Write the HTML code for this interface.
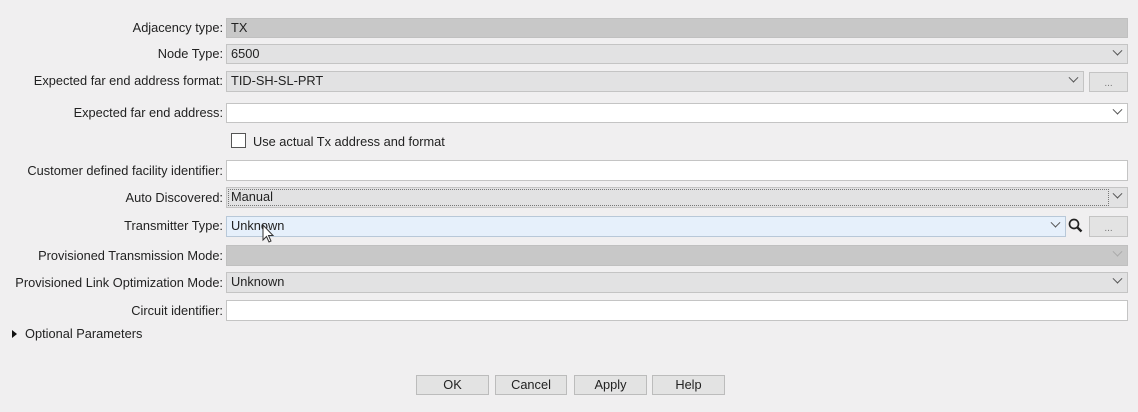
<!DOCTYPE html>
<html><head><style>
body{margin:0;width:1138px;height:412px;background:#f0eff0;font-family:"Liberation Sans",Arial,sans-serif;font-size:12.8px;color:#222;position:relative;overflow:hidden}
.l{position:absolute;right:915px;white-space:nowrap;text-align:right}
.f{position:absolute;left:226px;box-sizing:border-box;border:1px solid #c4c4c4;background:#fff;padding-left:4px;line-height:18px}
.g{background:#c8c8c8;border-color:#c0c0c0}
.d{background:#e2e2e3;border-color:#c4c4c4}
.ar{position:absolute;right:6px;top:5px;width:6px;height:6px;border-right:1.3px solid #555;border-bottom:1.3px solid #555;transform:rotate(45deg) translate(-2px,-2px)}
.b{position:absolute;box-sizing:border-box;border:1px solid #c4c4c4;background:#e3e3e3;text-align:center;color:#777;font-size:10px}
.btn{position:absolute;top:375px;height:20px;box-sizing:border-box;border:1px solid #bcbcbc;background:#e3e3e3;text-align:center;line-height:18px;color:#222}
</style></head><body>
<div class="l" style="top:20px">Adjacency type:</div>
<div class="f g" style="top:18px;width:902px;height:20px">TX</div>

<div class="l" style="top:46px">Node Type:</div>
<div class="f d" style="top:44px;width:902px;height:20px">6500<span class="ar"></span></div>

<div class="l" style="top:73px">Expected far end address format:</div>
<div class="f d" style="top:71px;width:858px;height:21px">TID-SH-SL-PRT<span class="ar"></span></div>
<div class="b" style="left:1089px;top:72px;width:39px;height:20px;line-height:22px">...</div>

<div class="l" style="top:105px">Expected far end address:</div>
<div class="f" style="top:103px;width:902px;height:20px"><span class="ar"></span></div>

<div style="position:absolute;left:231px;top:133px;width:15px;height:15px;box-sizing:border-box;border:1px solid #555;background:#fff"></div>
<div style="position:absolute;left:253px;top:134px">Use actual Tx address and format</div>

<div class="l" style="top:163px">Customer defined facility identifier:</div>
<div class="f" style="top:160px;width:902px;height:21px"></div>

<div class="l" style="top:190px">Auto Discovered:</div>
<div class="f d" style="top:187px;width:902px;height:21px"><div style="position:absolute;left:1px;top:1px;right:18px;bottom:1px;border:1px dotted #777"></div><span style="position:relative">Manual</span><span class="ar"></span></div>

<div class="l" style="top:218px">Transmitter Type:</div>
<div class="f" style="top:216px;width:840px;height:21px;background:#e6f0fb;border-color:#b8c8d8">Unknown<span class="ar"></span></div>
<svg style="position:absolute;left:1067px;top:217px" width="18" height="18" viewBox="0 0 18 18"><circle cx="7" cy="7" r="4.5" fill="none" stroke="#222" stroke-width="1.7"/><path d="M10.3 10.3L14.5 14.5" stroke="#222" stroke-width="2.4"/></svg>
<div class="b" style="left:1089px;top:216px;width:39px;height:21px;line-height:24px">...</div>
<svg style="position:absolute;left:262px;top:224px" width="14" height="20" viewBox="0 0 14 20"><path d="M1 1L1 16L4.5 12.5L7 18L9 17L6.5 11.5L11 11.5Z" fill="#fff" stroke="#333" stroke-width="1"/></svg>

<div class="l" style="top:248px">Provisioned Transmission Mode:</div>
<div class="f g" style="top:245px;width:902px;height:21px"><span class="ar" style="border-color:#aaa"></span></div>

<div class="l" style="top:275px">Provisioned Link Optimization Mode:</div>
<div class="f d" style="top:272px;width:902px;height:21px">Unknown<span class="ar"></span></div>

<div class="l" style="top:303px">Circuit identifier:</div>
<div class="f" style="top:300px;width:902px;height:21px"></div>

<div style="position:absolute;left:12px;top:330px;width:0;height:0;border-left:5px solid #111;border-top:4px solid transparent;border-bottom:4px solid transparent"></div>
<div style="position:absolute;left:25px;top:326px">Optional Parameters</div>

<div class="btn" style="left:416px;width:73px">OK</div>
<div class="btn" style="left:495px;width:72px">Cancel</div>
<div class="btn" style="left:574px;width:73px">Apply</div>
<div class="btn" style="left:652px;width:73px">Help</div>
</body></html>
